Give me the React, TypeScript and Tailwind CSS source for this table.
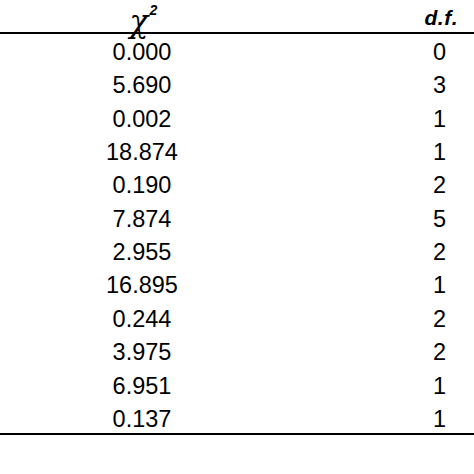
import React from 'react';

const rows: [string, string][] = [
  ['0.000', '0'],
  ['5.690', '3'],
  ['0.002', '1'],
  ['18.874', '1'],
  ['0.190', '2'],
  ['7.874', '5'],
  ['2.955', '2'],
  ['16.895', '1'],
  ['0.244', '2'],
  ['3.975', '2'],
  ['6.951', '1'],
  ['0.137', '1'],
];

const App: React.FC = () => {
  return (
    <div className="w-[474px] h-[474px] bg-white text-black font-['Liberation_Sans',Arial,sans-serif]">
      <div className="flex h-[34px] items-end border-b-2 border-black">
        <div className="w-[284px] flex justify-center pr-[6px]">
          <span className="relative inline-block font-['DejaVu_Serif',serif] italic text-[31px] leading-none translate-y-[5px]">
            χ
            <span className="absolute top-[-3px] right-[-9px] font-['Liberation_Sans',sans-serif] text-[14px] leading-none italic font-semibold">2</span>
          </span>
        </div>
        <div className="flex-1 text-right pr-[16px] pb-[4px] text-[21px] leading-none font-bold italic tracking-[0.5px]">
          d.f.
        </div>
      </div>
      <div className="pt-[2px]">
        {rows.map(([chi, df], i) => (
          <div key={i} className="flex h-[33.36px] items-center text-[23.5px] leading-none">
            <div className="w-[284px] text-center">{chi}</div>
            <div className="flex-1 text-right pr-[28px]">{df}</div>
          </div>
        ))}
      </div>
      <div className="-mt-[3px] border-b-2 border-black" />
    </div>
  );
};

export default App;
